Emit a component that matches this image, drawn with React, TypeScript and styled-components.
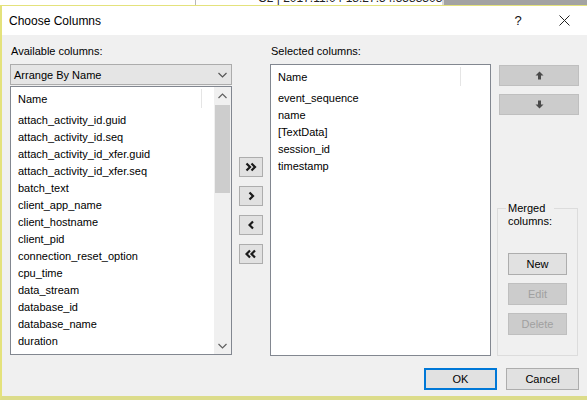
import React from 'react';
import styled, { createGlobalStyle } from 'styled-components';

const Global = createGlobalStyle`
  html, body { margin: 0; padding: 0; background: #f0f0f0; }
  body { width: 587px; height: 400px; overflow: hidden; font-family: "Liberation Sans", Arial, sans-serif; color: #000; }
  * { box-sizing: border-box; }
`;

const Screen = styled.div`
  width: 587px;
  height: 400px;
  display: flex;
  flex-direction: column;
  overflow: hidden;
`;

const BackStrip = styled.div`
  height: 5px;
  flex: none;
  background: #fff;
  display: flex;
  overflow: hidden;
`;

const BackGap = styled.div<{ $w: number }>`
  width: ${(p) => p.$w}px;
  flex: none;
`;

const BackLine = styled.div`
  width: 1px;
  flex: none;
  background: #b8b8b8;
`;

const BackText = styled.div`
  font-size: 12px;
  line-height: 12px;
  margin-top: -8px;
  color: #222;
  white-space: nowrap;
`;

const BackGray = styled.div`
  margin-left: auto;
  width: 152px;
  background: #a3a3a3;
  border-left: 2px solid #d8d8d8;
`;

const Dialog = styled.div`
  flex: 1;
  display: flex;
  flex-direction: column;
  border-left: 2px solid #e4e27c;
  border-top: 1px solid #e4e27c;
  border-bottom: 4px solid #dcdc8a;
`;

const TitleBar = styled.div`
  height: 29px;
  flex: none;
  background: #fff;
  display: flex;
  align-items: center;
`;

const Title = styled.div`
  padding-left: 7px;
  font-size: 12px;
  flex: 1;
`;

const TitleButton = styled.div`
  width: 46px;
  height: 29px;
  display: flex;
  align-items: center;
  justify-content: center;
  font-size: 13px;
  color: #111;
`;

const Body = styled.div`
  height: 361px;
  flex: none;
  background: #f0f0f0;
  padding: 8px 0 0 8px;
  display: flex;
  flex-direction: column;
`;

const MainRow = styled.div`
  height: 313px;
  display: flex;
`;

const Column = styled.div<{ $w: number }>`
  width: ${(p) => p.$w}px;
  flex: none;
  display: flex;
  flex-direction: column;
`;

const Label = styled.div`
  height: 16px;
  line-height: 16px;
  font-size: 11px;
  padding-left: 1px;
  margin-bottom: 5px;
`;

const Combo = styled.div`
  height: 21px;
  border: 1px solid #acacac;
  background: #e5e5e5;
  display: flex;
  align-items: center;
  padding-left: 3px;
  font-size: 11px;
`;

const ComboText = styled.div`
  flex: 1;
`;

const ComboArrow = styled.div`
  width: 17px;
  display: flex;
  justify-content: center;
  align-items: center;
`;

const ListBox = styled.div<{ $h: number; $top: number }>`
  height: ${(p) => p.$h}px;
  margin-top: ${(p) => p.$top}px;
  border: 1px solid #828790;
  background: #fff;
  display: flex;
  overflow: hidden;
`;

const ListContent = styled.div`
  flex: 1;
  display: flex;
  flex-direction: column;
`;

const Header = styled.div`
  height: 22px;
  flex: none;
  display: flex;
  align-items: stretch;
`;

const HeaderCell = styled.div<{ $w: number }>`
  width: ${(p) => p.$w}px;
  padding-left: 7px;
  display: flex;
  align-items: center;
  font-size: 11px;
  border-right: 1px solid #e5e5e5;
  margin: 2px 0 1px;
`;

const Items = styled.div`
  padding-top: 3px;
`;

const Item = styled.div`
  height: 17px;
  line-height: 17px;
  padding-left: 7px;
  font-size: 11px;
  white-space: nowrap;
`;

const ScrollBar = styled.div`
  width: 17px;
  flex: none;
  background: #f0f0f0;
  display: flex;
  flex-direction: column;
`;

const ScrollArrow = styled.div`
  height: 17px;
  flex: none;
  display: flex;
  align-items: center;
  justify-content: center;
`;

const ScrollThumb = styled.div`
  height: 88px;
  margin: 1px 1px 0;
  background: #cdcdcd;
`;

const ScrollTrack = styled.div`
  flex: 1;
`;

const MoveButtons = styled.div`
  display: flex;
  flex-direction: column;
  gap: 9px;
  padding: 114px 0 0 7px;
`;

const MoveButton = styled.div`
  width: 24px;
  height: 20px;
  background: #e1e1e1;
  border: 1px solid #adadad;
  display: flex;
  align-items: center;
  justify-content: center;
`;

const SideColumn = styled.div`
  width: 82px;
  flex: none;
  margin-left: 6px;
  display: flex;
  flex-direction: column;
  padding-top: 22px;
`;

const OrderButton = styled.div<{ $top: number }>`
  width: 80px;
  height: 21px;
  margin-left: 2px;
  margin-top: ${(p) => p.$top}px;
  background: #cccccc;
  border: 1px solid #bfbfbf;
  display: flex;
  align-items: center;
  justify-content: center;
`;

const GroupBox = styled.div`
  position: relative;
  width: 81px;
  height: 149px;
  margin-top: 93px;
  border: 1px solid #dcdcdc;
  display: flex;
  flex-direction: column;
  padding: 44px 0 0 10px;
  gap: 8px;
`;

const GroupLabel = styled.div`
  position: absolute;
  top: -7px;
  left: 8px;
  padding: 0 2px;
  background: #f0f0f0;
  font-size: 11px;
  line-height: 13px;
`;

const Button = styled.div<{ $w: number; $disabled?: boolean; $default?: boolean }>`
  width: ${(p) => p.$w}px;
  height: 22px;
  display: flex;
  align-items: center;
  justify-content: center;
  font-size: 11px;
  background: ${(p) => (p.$disabled ? '#cccccc' : '#e1e1e1')};
  color: ${(p) => (p.$disabled ? '#a0a0a0' : '#000')};
  border: ${(p) => (p.$default ? '2px solid #0078d7' : p.$disabled ? '1px solid #bfbfbf' : '1px solid #adadad')};
`;

const Footer = styled.div`
  margin-top: 12px;
  display: flex;
  justify-content: flex-end;
  gap: 9px;
  padding-right: 8px;
`;

const Chevron = ({ dir, color = '#606060' }: { dir: 'up' | 'down'; color?: string }) => (
  <svg width="9" height="6" viewBox="0 0 9 6">
    <polyline
      points={dir === 'up' ? '0.5,5 4.5,1 8.5,5' : '0.5,1 4.5,5 8.5,1'}
      fill="none"
      stroke={color}
      strokeWidth="1.2"
    />
  </svg>
);

const MoveIcon = ({ dir, double }: { dir: 'left' | 'right'; double?: boolean }) => {
  const one = (x: number) =>
    dir === 'right' ? `${x},1.5 ${x + 3.5},5 ${x},8.5` : `${x + 3.5},1.5 ${x},5 ${x + 3.5},8.5`;
  return (
    <svg width={double ? 12 : 7} height="10" viewBox={double ? '0 0 12 10' : '0 0 7 10'}>
      {double ? (
        <>
          <polyline points={one(1.5)} fill="none" stroke="#1a1a1a" strokeWidth="2.2" />
          <polyline points={one(6.5)} fill="none" stroke="#1a1a1a" strokeWidth="2.2" />
        </>
      ) : (
        <polyline points={one(1.5)} fill="none" stroke="#1a1a1a" strokeWidth="2.2" />
      )}
    </svg>
  );
};

const OrderArrow = ({ dir }: { dir: 'up' | 'down' }) => (
  <svg width="9" height="9" viewBox="0 0 9 9">
    <g transform={dir === 'down' ? 'rotate(180 4.5 4.5)' : undefined}>
      <polygon points="4.5,0.5 8.5,4.5 6,4.5 6,8.5 3,8.5 3,4.5 0.5,4.5" fill="#4a4a4a" />
    </g>
  </svg>
);

const CloseIcon = () => (
  <svg width="11" height="11" viewBox="0 0 11 11">
    <path d="M0.5 0.5 L10.5 10.5 M10.5 0.5 L0.5 10.5" stroke="#222" strokeWidth="1" fill="none" />
  </svg>
);

const available = [
  'attach_activity_id.guid',
  'attach_activity_id.seq',
  'attach_activity_id_xfer.guid',
  'attach_activity_id_xfer.seq',
  'batch_text',
  'client_app_name',
  'client_hostname',
  'client_pid',
  'connection_reset_option',
  'cpu_time',
  'data_stream',
  'database_id',
  'database_name',
  'duration',
];

const selected = ['event_sequence', 'name', '[TextData]', 'session_id', 'timestamp'];

export default function App() {
  return (
    <Screen>
      <Global />
      <BackStrip>
        <BackGap $w={195} />
        <BackLine />
        <BackGap $w={62} />
        <BackText>C2 | 2017.11.04 18:27:54.5583303</BackText>
        <BackGray />
      </BackStrip>
      <Dialog>
        <TitleBar>
          <Title>Choose Columns</Title>
          <TitleButton>?</TitleButton>
          <TitleButton>
            <CloseIcon />
          </TitleButton>
        </TitleBar>
        <Body>
          <MainRow>
            <Column $w={222}>
              <Label>Available columns:</Label>
              <Combo>
                <ComboText>Arrange By Name</ComboText>
                <ComboArrow>
                  <Chevron dir="down" color="#555" />
                </ComboArrow>
              </Combo>
              <ListBox $h={269} $top={1}>
                <ListContent>
                  <Header>
                    <HeaderCell $w={191}>Name</HeaderCell>
                  </Header>
                  <Items>
                    {available.map((n) => (
                      <Item key={n}>{n}</Item>
                    ))}
                  </Items>
                </ListContent>
                <ScrollBar>
                  <ScrollArrow>
                    <Chevron dir="up" />
                  </ScrollArrow>
                  <ScrollThumb />
                  <ScrollTrack />
                  <ScrollArrow>
                    <Chevron dir="down" />
                  </ScrollArrow>
                </ScrollBar>
              </ListBox>
            </Column>
            <Column $w={38}>
              <MoveButtons>
                <MoveButton>
                  <MoveIcon dir="right" double />
                </MoveButton>
                <MoveButton>
                  <MoveIcon dir="right" />
                </MoveButton>
                <MoveButton>
                  <MoveIcon dir="left" />
                </MoveButton>
                <MoveButton>
                  <MoveIcon dir="left" double />
                </MoveButton>
              </MoveButtons>
            </Column>
            <Column $w={221}>
              <Label>Selected columns:</Label>
              <ListBox $h={292} $top={0}>
                <ListContent>
                  <Header>
                    <HeaderCell $w={190}>Name</HeaderCell>
                  </Header>
                  <Items>
                    {selected.map((n) => (
                      <Item key={n}>{n}</Item>
                    ))}
                  </Items>
                </ListContent>
              </ListBox>
            </Column>
            <SideColumn>
              <OrderButton $top={0}>
                <OrderArrow dir="up" />
              </OrderButton>
              <OrderButton $top={8}>
                <OrderArrow dir="down" />
              </OrderButton>
              <GroupBox>
                <GroupLabel>
                  Merged
                  <br />
                  columns:
                </GroupLabel>
                <Button $w={59}>New</Button>
                <Button $w={59} $disabled>
                  Edit
                </Button>
                <Button $w={59} $disabled>
                  Delete
                </Button>
              </GroupBox>
            </SideColumn>
          </MainRow>
          <Footer>
            <Button $w={73} $default>
              OK
            </Button>
            <Button $w={73}>Cancel</Button>
          </Footer>
        </Body>
      </Dialog>
    </Screen>
  );
}
